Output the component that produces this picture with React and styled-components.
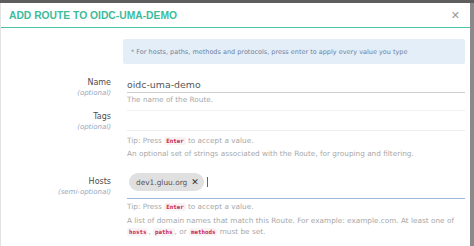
import React from 'react';
import styled, { createGlobalStyle } from 'styled-components';

const GlobalStyle = createGlobalStyle`
  html, body {
    margin: 0;
    padding: 0;
    background: #8a8a8a;
    font-family: "DejaVu Sans", "Open Sans", sans-serif;
  }
  body {
    border-top: 3px solid #5e5e5e;
  }
`;

const Modal = styled.div`
  width: 470px;
  height: 243px;
  background: #fff;
  border-left: 1px solid #e2e2e2;
  overflow: hidden;
  box-sizing: border-box;
`;

const Header = styled.div`
  height: 24px;
  display: flex;
  align-items: center;
  justify-content: space-between;
  padding: 0 10px 0 8px;
  border-bottom: 1px solid #4cc3a6;
`;

const Title = styled.h2`
  margin: 0;
  font-family: "Liberation Sans", Arial, sans-serif;
  font-size: 10.3px;
  font-weight: 700;
  color: #3dbb9c;
`;

const Close = styled.span`
  color: #9a9a9a;
  font-size: 11px;
  line-height: 1;
`;

const Body = styled.div`
  padding: 11px 5px 0 0;
`;

const Info = styled.div`
  margin-left: 122px;
  height: 25px;
  display: flex;
  align-items: center;
  padding-left: 8px;
  background: #e4eef8;
  border-radius: 2px;
  font-size: 6.5px;
  color: #6f819a;
`;

const Row = styled.div`
  display: grid;
  grid-template-columns: 110px 1fr;
  column-gap: 16px;
  margin-top: ${(p) => p.$top}px;
`;

const LabelCol = styled.div`
  text-align: right;
  padding-top: ${(p) => p.$pad || 0}px;
`;

const Label = styled.div`
  font-size: 8px;
  line-height: 11px;
  color: #4e4e4e;
`;

const Hint = styled.div`
  font-size: 7px;
  line-height: 10px;
  font-style: italic;
  color: #97a8c1;
`;

const Input = styled.div`
  display: flex;
  align-items: ${(p) => (p.$top ? 'flex-start' : 'center')};
  gap: 3px;
  height: ${(p) => p.$h}px;
  border-bottom: 1px solid ${(p) => p.$line};
  border-top: ${(p) => (p.$boxed ? '1px solid #f1f1f1' : 'none')};
  padding: ${(p) => p.$pt || 0}px 0 0 ${(p) => p.$pl || 0}px;
  font-size: 9.4px;
  color: #555;
  box-sizing: border-box;
`;

const Help = styled.div`
  font-size: 7.3px;
  line-height: ${(p) => p.$lh || 10}px;
  margin-top: ${(p) => p.$mt || 0}px;
  color: #a8a8a8;
  white-space: nowrap;
`;

const Code = styled.code`
  font-family: "DejaVu Sans Mono", monospace;
  font-weight: 700;
  font-size: 5.8px;
  line-height: 1;
  color: #c7254e;
  background: #f9f2f4;
  padding: 1px 2px;
  border-radius: 2px;
`;

const Chip = styled.span`
  display: inline-flex;
  align-items: center;
  gap: 4px;
  height: 18px;
  padding: 0 5px 0 7px;
  border-radius: 9px;
  background: #e0e0e0;
  font-size: 7.4px;
  color: #555;
`;

const ChipX = styled.span`
  font-size: 9px;
  font-weight: 700;
  color: #333;
  line-height: 1;
`;

const Caret = styled.span`
  width: 1px;
  height: 10px;
  margin-top: 4px;
  background: #666;
`;

export default function App() {
  return (
    <>
      <GlobalStyle />
      <Modal>
        <Header>
          <Title>ADD ROUTE TO OIDC-UMA-DEMO</Title>
          <Close>✕</Close>
        </Header>
        <Body>
          <Info>* For hosts, paths, methods and protocols, press enter to apply every value you type</Info>

          <Row $top={12}>
            <LabelCol $pad={1}>
              <Label>Name</Label>
              <Hint>(optional)</Hint>
            </LabelCol>
            <div>
              <Input $h={17} $line="#cfcfcf">oidc-uma-demo</Input>
              <Help $mt={2}>The name of the Route.</Help>
            </div>
          </Row>

          <Row $top={5}>
            <LabelCol $pad={1}>
              <Label>Tags</Label>
              <Hint>(optional)</Hint>
            </LabelCol>
            <div>
              <Input $h={21} $line="#ececec" $boxed />
              <Help $mt={5}>Tip: Press <Code>Enter</Code> to accept a value.</Help>
              <Help $mt={3}>An optional set of strings associated with the Route, for grouping and filtering.</Help>
            </div>
          </Row>

          <Row $top={12}>
            <LabelCol $pad={5}>
              <Label>Hosts</Label>
              <Hint>(semi-optional)</Hint>
            </LabelCol>
            <div>
              <Input $h={28} $line="#9fb7d8" $pl={2} $pt={2} $top>
                <Chip>dev1.gluu.org <ChipX>✕</ChipX></Chip>
                <Caret />
              </Input>
              <Help $mt={3}>Tip: Press <Code>Enter</Code> to accept a value.</Help>
              <Help $mt={3} $lh={11}>
                A list of domain names that match this Route. For example: example.com. At least one of
                <br />
                <Code>hosts</Code>, <Code>paths</Code>, or <Code>methods</Code> must be set.
              </Help>
            </div>
          </Row>
        </Body>
      </Modal>
    </>
  );
}
